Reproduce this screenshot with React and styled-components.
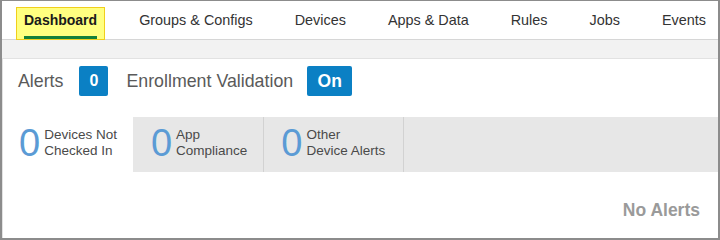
import React from 'react';
import styled, { createGlobalStyle } from 'styled-components';

const GlobalStyle = createGlobalStyle`
  html, body {
    margin: 0;
    padding: 0;
    background: #ffffff;
  }
  body {
    font-family: "Liberation Sans", Arial, sans-serif;
  }
`;

const navItems = ['Dashboard', 'Groups & Configs', 'Devices', 'Apps & Data', 'Rules', 'Jobs', 'Events'];

const tabs = [
  { count: 0, label: ['Devices Not', 'Checked In'], active: true },
  { count: 0, label: ['App', 'Compliance'] },
  { count: 0, label: ['Other', 'Device Alerts'] },
];

function App() {
  return (
    <>
      <GlobalStyle />
      <Frame>
        <NavBar>
          {navItems.map((item, i) => (
            <NavItem key={item} $active={i === 0}>
              <NavText $active={i === 0}>{item}</NavText>
            </NavItem>
          ))}
        </NavBar>
        <Strip />
        <Panel>
          <StatusRow>
            <StatusGroup $gap={16}>
              <StatusLabel>Alerts</StatusLabel>
              <Badge>0</Badge>
            </StatusGroup>
            <StatusGroup $gap={14}>
              <StatusLabel>Enrollment Validation</StatusLabel>
              <Badge $wide>On</Badge>
            </StatusGroup>
          </StatusRow>

          <TabBar>
            {tabs.map((t) => (
              <Tab key={t.label.join(' ')} $active={t.active}>
                <Count>{t.count}</Count>
                <TabLabel>
                  {t.label[0]}
                  <br />
                  {t.label[1]}
                </TabLabel>
              </Tab>
            ))}
          </TabBar>

          <Empty>No Alerts</Empty>
        </Panel>
      </Frame>
    </>
  );
}

export default App;

const Frame = styled.div`
  box-sizing: border-box;
  width: 720px;
  height: 240px;
  border: 2px solid #8c8c8c;
  border-top-width: 1px;
  display: flex;
  flex-direction: column;
  overflow: hidden;
`;

const NavBar = styled.nav`
  display: flex;
  align-items: flex-end;
  height: 38px;
  padding-left: 14px;
  gap: 26px;
  border-bottom: 1px solid #d6d6d6;
  background: #fff;
`;

const NavItem = styled.div`
  box-sizing: border-box;
  height: 33px;
  margin-bottom: -1px;
  padding: 3px 7px 0;
  background: ${(p) => (p.$active ? '#ffff80' : 'transparent')};
  border: 1px solid ${(p) => (p.$active ? '#f0cf1c' : 'transparent')};
`;

const NavText = styled.span`
  display: inline-block;
  font-size: ${(p) => (p.$active ? '14px' : '14.4px')};
  line-height: 16px;
  padding-bottom: 8px;
  color: ${(p) => (p.$active ? '#1a1a1a' : '#333')};
  font-weight: ${(p) => (p.$active ? 700 : 400)};
  border-bottom: 3px solid ${(p) => (p.$active ? '#13803a' : 'transparent')};
`;

const Strip = styled.div`
  height: 18px;
  background: #f2f2f2;
`;

const Panel = styled.section`
  flex: 1;
  display: flex;
  flex-direction: column;
  background: #fff;
  border-top: 1px solid #e2e2e2;
  border-left: 1px solid #e2e2e2;
`;

const StatusRow = styled.div`
  display: flex;
  align-items: center;
  gap: 18px;
  padding: 7px 0 0 15px;
`;

const StatusGroup = styled.div`
  display: flex;
  align-items: center;
  gap: ${(p) => p.$gap}px;
`;

const StatusLabel = styled.span`
  font-size: 17.8px;
  color: #5a5a5a;
`;

const Badge = styled.span`
  display: inline-flex;
  align-items: center;
  justify-content: center;
  box-sizing: border-box;
  height: 30px;
  min-width: ${(p) => (p.$wide ? '45px' : '29px')};
  padding: 0 6px;
  border-radius: 2px;
  background: #0b80c4;
  color: #fff;
  font-weight: 700;
  font-size: ${(p) => (p.$wide ? '17.5px' : '16px')};
`;

const TabBar = styled.div`
  display: flex;
  height: 55px;
  margin-top: 21px;
  background: #e7e7e7;
`;

const Tab = styled.div`
  display: flex;
  align-items: center;
  gap: 4px;
  padding: 0 16px 4px 16px;
  background: ${(p) => (p.$active ? '#fff' : '#e7e7e7')};
  border-right: 1px solid ${(p) => (p.$active ? '#e7e7e7' : '#d2d2d2')};
  & + & {
    padding-left: 17px;
  }
  &:last-child {
    padding-right: 18px;
  }
`;

const Count = styled.span`
  font-size: 38px;
  line-height: 38px;
  color: #5b9bd5;
`;

const TabLabel = styled.span`
  font-size: 13.5px;
  line-height: 16px;
  color: #4a4a4a;
`;

const Empty = styled.div`
  margin-top: 28px;
  padding-right: 18px;
  text-align: right;
  font-size: 17.5px;
  font-weight: 700;
  color: #9a9a9a;
`;
